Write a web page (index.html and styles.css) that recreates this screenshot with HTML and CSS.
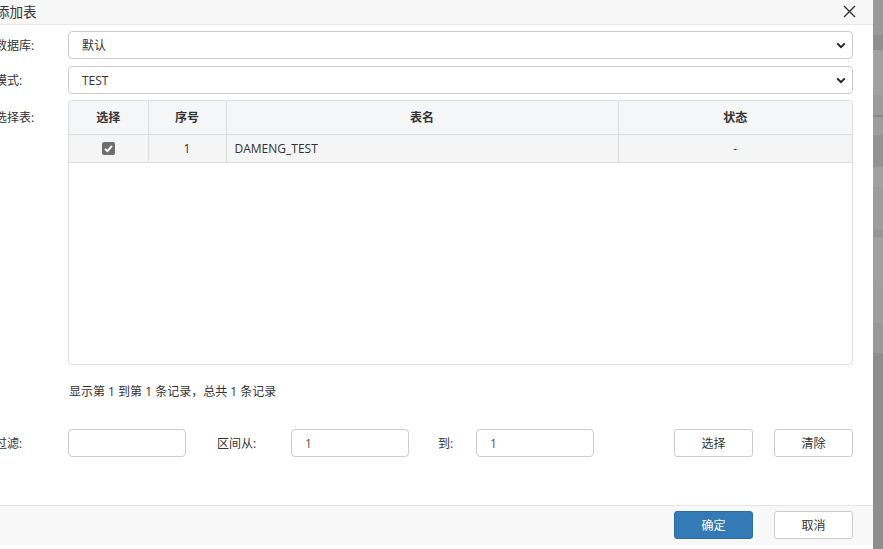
FILE: index.html
```html
<!DOCTYPE html>
<html lang="zh-CN">
<head>
<meta charset="utf-8">
<title>添加表</title>
<link rel="stylesheet" href="styles.css">
</head>
<body>
<div class="page">
  <div class="dialog">
    <div class="dlg-header">
      <span class="dlg-title">添加表</span>
      <svg class="close" width="13" height="13" viewBox="0 0 13 13"><path d="M1 1L12 12M12 1L1 12" stroke="#333" stroke-width="1.4" fill="none"/></svg>
    </div>
    <div class="dlg-body">
      <div class="form-row">
        <label class="lbl">数据库:</label>
        <div class="select"><span>默认</span><svg class="chev" width="10" height="7" viewBox="0 0 10 7"><path d="M1.2 1.4L5 5.2L8.8 1.4" stroke="#222" stroke-width="2" fill="none"/></svg></div>
      </div>
      <div class="form-row">
        <label class="lbl">模式:</label>
        <div class="select"><span>TEST</span><svg class="chev" width="10" height="7" viewBox="0 0 10 7"><path d="M1.2 1.4L5 5.2L8.8 1.4" stroke="#222" stroke-width="2" fill="none"/></svg></div>
      </div>
      <div class="form-row top">
        <label class="lbl lbl-top">选择表:</label>
        <div class="table-wrap">
          <table class="grid">
            <colgroup><col class="c1"><col class="c2"><col class="c3"><col class="c4"></colgroup>
            <thead>
              <tr><th>选择</th><th>序号</th><th>表名</th><th>状态</th></tr>
            </thead>
            <tbody>
              <tr class="sel">
                <td class="center"><svg class="cb" width="13" height="13" viewBox="0 0 13 13"><rect x="0" y="0" width="13" height="13" rx="2" fill="#6e6e6e"/><path d="M3 6.8L5.4 9.1L10 3.9" stroke="#fff" stroke-width="1.8" fill="none"/></svg></td>
                <td class="center">1</td>
                <td class="left">DAMENG_TEST</td>
                <td class="center">-</td>
              </tr>
            </tbody>
          </table>
        </div>
      </div>
      <div class="info-row">
        <span class="info">显示第 1 到第 1 条记录，总共 1 条记录</span>
      </div>
      <div class="filter-row">
        <label class="lbl">过滤:</label>
        <div class="input"></div>
        <label class="lbl-range">区间从:</label>
        <div class="input"><span>1</span></div>
        <label class="lbl-to">到:</label>
        <div class="input"><span>1</span></div>
        <div class="btns">
          <button class="btn">选择</button>
          <button class="btn">清除</button>
        </div>
      </div>
    </div>
    <div class="dlg-footer">
      <button class="btn primary">确定</button>
      <button class="btn">取消</button>
    </div>
  </div>
  <div class="backdrop"></div>
</div>
</body>
</html>
```
FILE: styles.css
```css
* { box-sizing: border-box; }
html, body { margin: 0; padding: 0; background: #fff; }
body {
  font-family: "Open Sans", "Noto Sans CJK SC", sans-serif;
  font-size: 12px;
  color: #333;
  overflow: hidden;
  width: 883px;
  height: 549px;
}
.page {
  display: flex;
  height: 549px;
}
.dialog {
  width: 893px;
  margin-left: -20px;
  height: 545px;
  background: #fff;
  display: flex;
  flex-direction: column;
  border-bottom-right-radius: 4px;
  overflow: hidden;
  flex: none;
}
.dlg-header {
  height: 25px;
  background: #f7f7f7;
  border-bottom: 1px solid #e8e8e8;
  display: flex;
  align-items: center;
  padding-left: 16px;
  padding-right: 17px;
}
.dlg-title {
  font-size: 13.5px;
  color: #333;
  flex: 1;
  line-height: 24px;
}
.close { display: block; margin-top: -1px; }
.dlg-body {
  flex: 1;
  padding: 6px 20px 0 15px;
  display: flex;
  flex-direction: column;
}
.form-row {
  display: flex;
  align-items: center;
  margin-bottom: 7px;
}
.form-row.top { align-items: flex-start; margin-bottom: 0; }
.lbl {
  width: 73px;
  flex: none;
  color: #333;
  white-space: nowrap;
}
.lbl-top { padding-top: 7px; }
.select {
  flex: 1;
  height: 28px;
  border: 1px solid #ccc;
  border-radius: 4px;
  display: flex;
  align-items: center;
  padding: 0 6px 0 13px;
  color: #333;
  background: #fff;
}
.select span { flex: 1; }
.chev { display: block; }
.table-wrap {
  flex: 1;
  height: 265px;
  border: 1px solid #ddd;
  border-radius: 4px;
  overflow: hidden;
  margin-top: -1px;
}
.grid {
  width: 100%;
  border-collapse: collapse;
  table-layout: fixed;
}
.c1 { width: 79px; }
.c2 { width: 78px; }
.c3 { width: 392px; }
.grid th {
  height: 33px;
  background: #f5f6f8;
  font-weight: 600;
  color: #333;
  border-bottom: 1px solid #ddd;
  border-left: 1px solid #ddd;
  text-align: center;
  padding: 0;
}
.grid th:first-child, .grid td:first-child { border-left: none; }
.grid td {
  height: 28px;
  border-bottom: 1px solid #ddd;
  border-left: 1px solid #ddd;
  padding: 0;
}
.grid tr.sel td { background: #f5f5f5; }
.center { text-align: center; }
.left { padding-left: 8px !important; }
.cb { display: inline-block; vertical-align: middle; margin-top: -2px; }
.info-row {
  padding-left: 74px;
  height: 64px;
  padding-top: 17px;
}
.info { color: #333; }
.filter-row {
  display: flex;
  align-items: center;
  height: 28px;
}
.input {
  width: 118px;
  height: 28px;
  border: 1px solid #ccc;
  border-radius: 4px;
  display: flex;
  align-items: center;
  padding-left: 13px;
  color: #555;
  flex: none;
}
.lbl-range { width: 74px; margin-left: 31px; flex: none; }
.lbl-to { width: 38px; margin-left: 29px; flex: none; }
.btns {
  margin-left: auto;
  display: flex;
  gap: 21px;
}
.btn {
  width: 79px;
  height: 28px;
  border: 1px solid #ccc;
  border-radius: 3px;
  background: #fff;
  color: #333;
  font-family: "Open Sans", "Noto Sans CJK SC", sans-serif;
  font-size: 12px;
  padding: 0;
}
.btn.primary {
  background: #337ab7;
  border-color: #2e6da4;
  color: #fff;
}
.dlg-footer {
  height: 40px;
  border-top: 1px solid #e5e5e5;
  background: #f9f8f8;
  display: flex;
  justify-content: flex-end;
  gap: 21px;
  padding: 5px 20px 0 0;
}
.backdrop {
  flex: 1;
  height: 549px;
  background: linear-gradient(to bottom,
    #999 0, #999 35px,
    #8f8f8f 35px, #8f8f8f 50px,
    #a1a1a1 50px, #a1a1a1 95px,
    #9b9b9b 95px, #9b9b9b 115px,
    #8a8a8a 115px, #8a8a8a 117px,
    #9d9d9d 117px, #9d9d9d 135px,
    #939393 135px, #939393 167px,
    #a1a1a1 167px, #a1a1a1 187px,
    #9d9d9d 187px, #9d9d9d 230px,
    #959595 230px, #959595 237px,
    #a0a0a0 237px, #a0a0a0 287px,
    #9e9e9e 287px, #9e9e9e 323px,
    #999 323px, #999 353px,
    #8e8e8e 353px, #8e8e8e 549px);
}
```
